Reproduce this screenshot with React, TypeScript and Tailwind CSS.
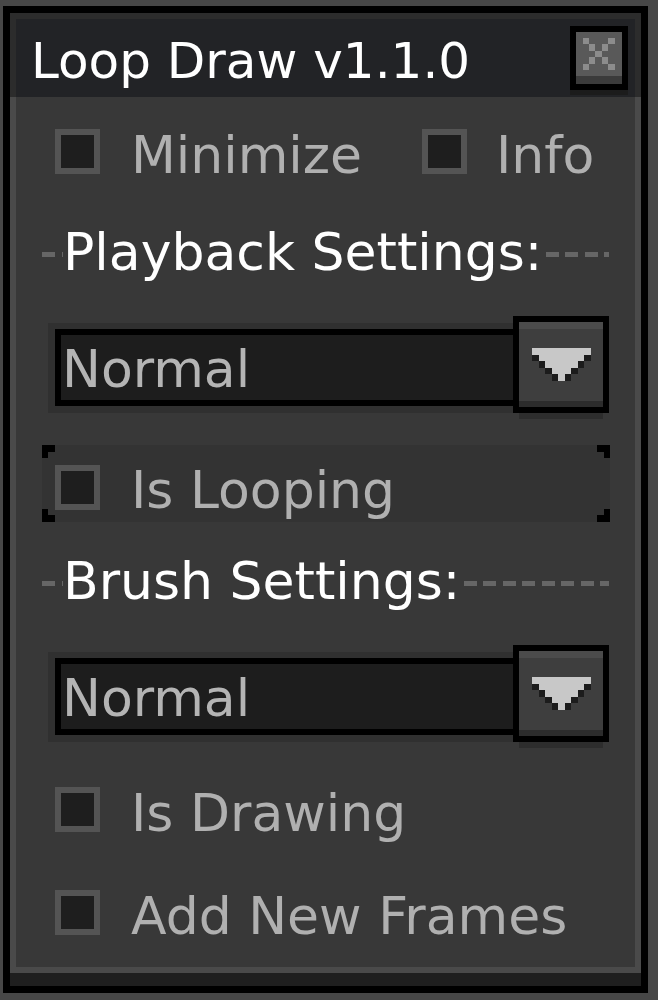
import React from "react";

const font = { fontFamily: '"DejaVu Sans", "Noto Sans", sans-serif' };

const Checkbox = () => (
  <div className="w-[45px] h-[45px] shrink-0 border-[6px] border-[#545454] bg-[#1e1e1e]" />
);

const Toggle = ({ label, gap = "gap-[31px]" }: { label: string; gap?: string }) => (
  <div className={`flex items-center ${gap}`}>
    <Checkbox />
    <span className="pt-[6px] text-[52px] leading-none text-[#b0b0b0] whitespace-nowrap">{label}</span>
  </div>
);

const Dashes = ({ className }: { className: string }) => (
  <div
    className={`h-[5px] bg-[repeating-linear-gradient(90deg,#666666_0_13px,transparent_13px_19.5px)] ${className}`}
  />
);

const SectionHeader = ({ title, className }: { title: string; className: string }) => (
  <div className={`flex h-[52px] items-center pl-[26px] pr-[26px] ${className}`}>
    <Dashes className="mt-[5px] w-[21px] shrink-0" />
    <span className="text-[52px] leading-none text-white whitespace-nowrap">{title}</span>
    <Dashes className="mt-[5px] ml-[4px] flex-1" />
  </div>
);

const ArrowDown = () => (
  <svg width="59" height="33" viewBox="0 0 9 5" shapeRendering="crispEdges">
    <rect x="0" y="0" width="9" height="1" fill="#c8c8c8" />
    <rect x="0" y="1" width="1" height="1" fill="#1c1c1c" />
    <rect x="1" y="1" width="7" height="1" fill="#c8c8c8" />
    <rect x="8" y="1" width="1" height="1" fill="#1c1c1c" />
    <rect x="1" y="2" width="1" height="1" fill="#1c1c1c" />
    <rect x="2" y="2" width="5" height="1" fill="#c8c8c8" />
    <rect x="7" y="2" width="1" height="1" fill="#1c1c1c" />
    <rect x="2" y="3" width="1" height="1" fill="#1c1c1c" />
    <rect x="3" y="3" width="3" height="1" fill="#c8c8c8" />
    <rect x="6" y="3" width="1" height="1" fill="#1c1c1c" />
    <rect x="3" y="4" width="1" height="1" fill="#1c1c1c" />
    <rect x="4" y="4" width="1" height="1" fill="#c8c8c8" />
    <rect x="5" y="4" width="1" height="1" fill="#1c1c1c" />
  </svg>
);

const PixelX = () => (
  <svg width="33" height="32" viewBox="0 0 5 5" shapeRendering="crispEdges" fill="#8c8c8c">
    <rect x="0" y="0" width="1" height="1" />
    <rect x="1" y="1" width="1" height="1" />
    <rect x="2" y="2" width="1" height="1" />
    <rect x="3" y="3" width="1" height="1" />
    <rect x="4" y="4" width="1" height="1" />
    <rect x="4" y="0" width="1" height="1" />
    <rect x="3" y="1" width="1" height="1" />
    <rect x="1" y="3" width="1" height="1" />
    <rect x="0" y="4" width="1" height="1" />
  </svg>
);

const Dropdown = ({ value }: { value: string }) => (
  <div className="mt-[38px] flex items-start pl-[32px]">
    <div className="mt-[7px] h-[90px] w-[465px] bg-[#303030] pl-[7px] pt-[6px] pb-[7px]">
      <div className="flex h-full items-center border-[6px] border-r-0 border-black bg-[#1d1d1d] pl-[1px]">
        <span className="pt-[2px] text-[52px] leading-none text-[#b4b4b4]">{value}</span>
      </div>
    </div>
    <div className="h-[97px] w-[96px] bg-black p-[6px] shadow-[0_12px_0_-6px_#2d2d2d]">
      <div className="flex h-full flex-col border-t-[7px] border-b-[6px] border-t-[#4b4b4b] border-b-[#2c2c2c] bg-[#3e3e3e] items-center pt-[19px]">
        <ArrowDown />
      </div>
    </div>
  </div>
);

const Bracket = ({ pos }: { pos: string }) => {
  const top = pos.startsWith("t");
  return (
    <div className={`absolute left-0 flex flex-col ${top ? "top-0" : "bottom-0 flex-col-reverse"}`}>
      <div className="h-[7px] w-[13px] bg-black" />
      <div className="h-[6px] w-[6px] bg-black" />
    </div>
  );
};

const BracketR = ({ pos }: { pos: string }) => {
  const top = pos.startsWith("t");
  return (
    <div className={`absolute right-0 flex flex-col items-end ${top ? "top-0" : "bottom-0 flex-col-reverse"}`}>
      <div className="h-[7px] w-[13px] bg-black" />
      <div className="h-[6px] w-[6px] bg-black" />
    </div>
  );
};

export default function App() {
  return (
    <div className="h-[1000px] w-[658px] bg-[#474747] pt-[6px] pl-[3px]" style={font}>
      <div className="h-[987px] w-[645px] bg-black p-[7px]">
        <div className="flex h-full flex-col">
          {/* Title bar */}
          <div className="flex h-[84px] shrink-0 items-center justify-between border-x-[6px] border-t-[6px] border-[#2c2c2c] bg-[#222326] pl-[15px] pr-[7px]">
            <span className="pt-[5px] text-[50px] leading-none text-white whitespace-nowrap">Loop Draw v1.1.0</span>
            <div className="h-[64px] w-[58px] bg-black p-[6px] shadow-[0_5px_0_0_#1c1c1c]">
              <div className="flex h-full flex-col border-b-[8px] border-[#3b3b3b] bg-[#595959] pl-[6px] pt-[6px]">
                <PixelX />
              </div>
            </div>
          </div>

          {/* Content */}
          <div className="flex flex-1 flex-col border-x-[6px] border-b-[6px] border-[#4a4a4a] bg-[#383838] pt-[32px]">
            <div className="flex h-[45px] items-center pl-[39px]">
              <div className="w-[367px]">
                <Toggle label="Minimize" />
              </div>
              <Toggle label="Info" gap="gap-[29px]" />
            </div>

            <SectionHeader title="Playback Settings:" className="mt-[52px]" />

            <Dropdown value="Normal" />

            <div className="relative ml-[26px] mt-[32px] h-[77px] w-[568px] bg-[#333333] pl-[13px] pt-[13px]">
              <Bracket pos="tl" />
              <Bracket pos="bl" />
              <BracketR pos="tr" />
              <BracketR pos="br" />
              <Toggle label="Is Looping" />
            </div>

            <SectionHeader title="Brush Settings:" className="mt-[33px]" />

            <Dropdown value="Normal" />

            <div className="mt-[45px] flex h-[45px] items-center pl-[39px]">
              <Toggle label="Is Drawing" />
            </div>
            <div className="mt-[58px] flex h-[45px] items-center pl-[39px]">
              <Toggle label="Add New Frames" />
            </div>
          </div>

          <div className="h-[13px] shrink-0 bg-[#1f1f1f]" />
        </div>
      </div>
    </div>
  );
}
